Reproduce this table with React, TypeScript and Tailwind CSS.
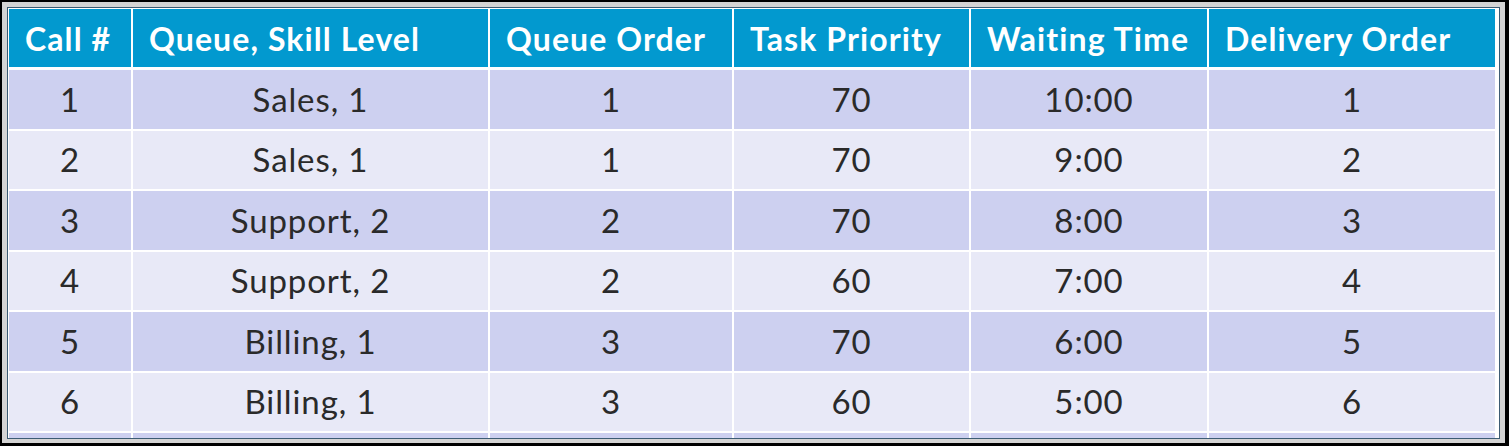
import React from 'react';

const HEADERS = ['Call #', 'Queue, Skill Level', 'Queue Order', 'Task Priority', 'Waiting Time', 'Delivery Order'];

const ROWS: string[][] = [
    ['1', 'Sales, 1', '1', '70', '10:00', '1'],
    ['2', 'Sales, 1', '1', '70', '9:00', '2'],
    ['3', 'Support, 2', '2', '70', '8:00', '3'],
    ['4', 'Support, 2', '2', '60', '7:00', '4'],
    ['5', 'Billing, 1', '3', '70', '6:00', '5'],
    ['6', 'Billing, 1', '3', '60', '5:00', '6'],
    ['', '', '', '', '', ''],
];

const COLS = 'grid grid-cols-[122px_355px_242px_235px_236px_1fr] gap-x-[2px]';

export default function App() {
    return (
        <div className="w-[1509px] h-[446px] bg-black pl-[2px] pt-[2px] pr-[4px] pb-[3px] font-['Lato',sans-serif]">
            <div className="h-full bg-[#d4d4d4] pl-[5px] pt-[5px] pr-[5px] pb-[4px]">
                <div className="h-full border border-[#3d5c74] bg-white overflow-hidden pl-[1px] pt-[1px] pr-[4px]">
                    {/* Header */}
                    <div className={`${COLS} h-[58px] mb-[3px]`}>
                        {HEADERS.map((h) => (
                            <div key={h} className="bg-[#0299cf] flex items-center pl-[16px] pt-[2px] text-white font-bold text-[32px] tracking-[1.1px] whitespace-nowrap">
                                {h}
                            </div>
                        ))}
                    </div>

                    {/* Body */}
                    <div className="flex flex-col gap-y-[2px]">
                        {ROWS.map((row, i) => (
                            <div key={i} className={`${COLS} h-[58.5px] shrink-0`}>
                                {row.map((cell, j) => (
                                    <div
                                        key={j}
                                        className={`flex items-center justify-center text-[33px] tracking-[0.9px] text-[#2a2a2a] ${i % 2 === 0 ? 'bg-[#cdd0f0]' : 'bg-[#e8e9f7]'}`}
                                    >
                                        {cell}
                                    </div>
                                ))}
                            </div>
                        ))}
                    </div>
                </div>
            </div>
        </div>
    );
}
